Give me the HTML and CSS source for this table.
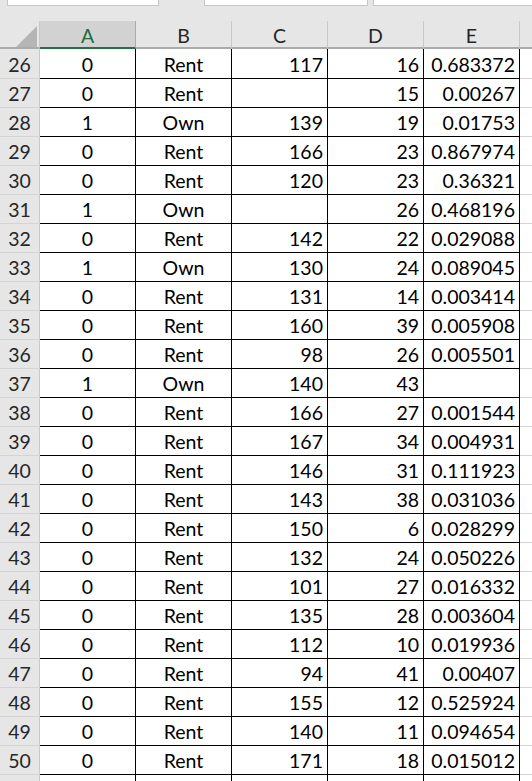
FILE: index.html
```html
<!DOCTYPE html>
<html>
<head>
<meta charset="utf-8">
<link rel="stylesheet" href="styles.css">
</head>
<body>
<div class="topbar">
  <div class="box box-name"></div>
  <div class="box box-mid"></div>
  <div class="box box-formula"></div>
</div>
<div class="sheet">
  <div class="corner"><svg width="21" height="21" viewBox="0 0 21 21"><polygon points="21,0 21,21 0,21" fill="#b5b5b5"/></svg></div>
  <div class="colhead selected">A</div>
  <div class="colhead">B</div>
  <div class="colhead">C</div>
  <div class="colhead">D</div>
  <div class="colhead">E</div>
  <div class="colhead rest"></div>
</div>
<div class="sheet data">
  <div class="rh first">26</div><div class="c ctr first">0</div><div class="c ctr first">Rent</div><div class="c r first">117</div><div class="c r first">16</div><div class="c r first">0.683372</div><div class="c x first"></div>
  <div class="rh">27</div><div class="c ctr">0</div><div class="c ctr">Rent</div><div class="c r"></div><div class="c r">15</div><div class="c r">0.00267</div><div class="c x"></div>
  <div class="rh">28</div><div class="c ctr">1</div><div class="c ctr">Own</div><div class="c r">139</div><div class="c r">19</div><div class="c r">0.01753</div><div class="c x"></div>
  <div class="rh">29</div><div class="c ctr">0</div><div class="c ctr">Rent</div><div class="c r">166</div><div class="c r">23</div><div class="c r">0.867974</div><div class="c x"></div>
  <div class="rh">30</div><div class="c ctr">0</div><div class="c ctr">Rent</div><div class="c r">120</div><div class="c r">23</div><div class="c r">0.36321</div><div class="c x"></div>
  <div class="rh">31</div><div class="c ctr">1</div><div class="c ctr">Own</div><div class="c r"></div><div class="c r">26</div><div class="c r">0.468196</div><div class="c x"></div>
  <div class="rh">32</div><div class="c ctr">0</div><div class="c ctr">Rent</div><div class="c r">142</div><div class="c r">22</div><div class="c r">0.029088</div><div class="c x"></div>
  <div class="rh">33</div><div class="c ctr">1</div><div class="c ctr">Own</div><div class="c r">130</div><div class="c r">24</div><div class="c r">0.089045</div><div class="c x"></div>
  <div class="rh">34</div><div class="c ctr">0</div><div class="c ctr">Rent</div><div class="c r">131</div><div class="c r">14</div><div class="c r">0.003414</div><div class="c x"></div>
  <div class="rh">35</div><div class="c ctr">0</div><div class="c ctr">Rent</div><div class="c r">160</div><div class="c r">39</div><div class="c r">0.005908</div><div class="c x"></div>
  <div class="rh">36</div><div class="c ctr">0</div><div class="c ctr">Rent</div><div class="c r">98</div><div class="c r">26</div><div class="c r">0.005501</div><div class="c x"></div>
  <div class="rh">37</div><div class="c ctr">1</div><div class="c ctr">Own</div><div class="c r">140</div><div class="c r">43</div><div class="c r"></div><div class="c x"></div>
  <div class="rh">38</div><div class="c ctr">0</div><div class="c ctr">Rent</div><div class="c r">166</div><div class="c r">27</div><div class="c r">0.001544</div><div class="c x"></div>
  <div class="rh">39</div><div class="c ctr">0</div><div class="c ctr">Rent</div><div class="c r">167</div><div class="c r">34</div><div class="c r">0.004931</div><div class="c x"></div>
  <div class="rh">40</div><div class="c ctr">0</div><div class="c ctr">Rent</div><div class="c r">146</div><div class="c r">31</div><div class="c r">0.111923</div><div class="c x"></div>
  <div class="rh">41</div><div class="c ctr">0</div><div class="c ctr">Rent</div><div class="c r">143</div><div class="c r">38</div><div class="c r">0.031036</div><div class="c x"></div>
  <div class="rh">42</div><div class="c ctr">0</div><div class="c ctr">Rent</div><div class="c r">150</div><div class="c r">6</div><div class="c r">0.028299</div><div class="c x"></div>
  <div class="rh">43</div><div class="c ctr">0</div><div class="c ctr">Rent</div><div class="c r">132</div><div class="c r">24</div><div class="c r">0.050226</div><div class="c x"></div>
  <div class="rh">44</div><div class="c ctr">0</div><div class="c ctr">Rent</div><div class="c r">101</div><div class="c r">27</div><div class="c r">0.016332</div><div class="c x"></div>
  <div class="rh">45</div><div class="c ctr">0</div><div class="c ctr">Rent</div><div class="c r">135</div><div class="c r">28</div><div class="c r">0.003604</div><div class="c x"></div>
  <div class="rh">46</div><div class="c ctr">0</div><div class="c ctr">Rent</div><div class="c r">112</div><div class="c r">10</div><div class="c r">0.019936</div><div class="c x"></div>
  <div class="rh">47</div><div class="c ctr">0</div><div class="c ctr">Rent</div><div class="c r">94</div><div class="c r">41</div><div class="c r">0.00407</div><div class="c x"></div>
  <div class="rh">48</div><div class="c ctr">0</div><div class="c ctr">Rent</div><div class="c r">155</div><div class="c r">12</div><div class="c r">0.525924</div><div class="c x"></div>
  <div class="rh">49</div><div class="c ctr">0</div><div class="c ctr">Rent</div><div class="c r">140</div><div class="c r">11</div><div class="c r">0.094654</div><div class="c x"></div>
  <div class="rh">50</div><div class="c ctr">0</div><div class="c ctr">Rent</div><div class="c r">171</div><div class="c r">18</div><div class="c r">0.015012</div><div class="c x"></div>
  <div class="rh last"></div><div class="c last"></div><div class="c last"></div><div class="c last"></div><div class="c last"></div><div class="c last"></div><div class="c x last"></div>
</div>
</body>
</html>
```

FILE: styles.css
```css
* { box-sizing: border-box; }
html, body {
  margin: 0;
  padding: 0;
  width: 532px;
  height: 781px;
  overflow: hidden;
  background: #e6e6e6;
  font-family: Lato, "Open Sans", sans-serif;
  font-size: 19.5px;
  color: #000;
}
.topbar {
  height: 21px;
  display: flex;
  align-items: flex-start;
  overflow: hidden;
}
.box {
  height: 7px;
  margin-top: -1px;
  background: #fff;
  border: 1px solid #c6c6c6;
}
.box-name { margin-left: 7px; width: 152px; }
.box-mid { margin-left: 45px; width: 164px; }
.box-formula { margin-left: 5px; flex: 1; margin-right: -2px; }

.sheet {
  display: grid;
  grid-template-columns: 40px repeat(5, 96px) 1fr;
}
.corner {
  height: 28px;
  background: #e6e6e6;
  border-right: 1px solid #c8c8c8;
  border-bottom: 2px solid #ababab;
  display: flex;
  justify-content: flex-end;
  align-items: flex-end;
  padding: 0 2px 0 0;
}
.corner svg { display: block; }
.colhead {
  height: 28px;
  background: #e6e6e6;
  border-right: 1px solid #c8c8c8;
  border-bottom: 2px solid #ababab;
  display: flex;
  justify-content: center;
  align-items: flex-end;
  line-height: 22px;
  padding-bottom: 0;
  color: #262626;
}
.colhead.selected {
  background: #d2d2d2;
  border-right-color: #ababab;
  border-bottom-color: #217346;
  color: #1d6b40;
}
.colhead.rest { border-right: none; }

.data { background: #fff; }
.rh, .c {
  height: 29px;
  display: flex;
  align-items: flex-end;
  line-height: 22px;
  padding-bottom: 2px;
  white-space: nowrap;
}
.first { height: 30px; }
.last { height: 10px; border-bottom: none !important; }
.rh {
  background: #e6e6e6;
  border-right: 1px solid #c8c8c8;
  border-bottom: 1px solid #d4d4d4;
  justify-content: center;
  color: #262626;
}
.c {
  background: #fff;
  border-right: 1px solid #000;
  border-bottom: 1px solid #000;
}
.ctr { justify-content: center; }
.r { justify-content: flex-end; padding-right: 4px; }
.c.x {
  border-right: none;
  border-bottom: 1px solid #d4d4d4;
}
```
